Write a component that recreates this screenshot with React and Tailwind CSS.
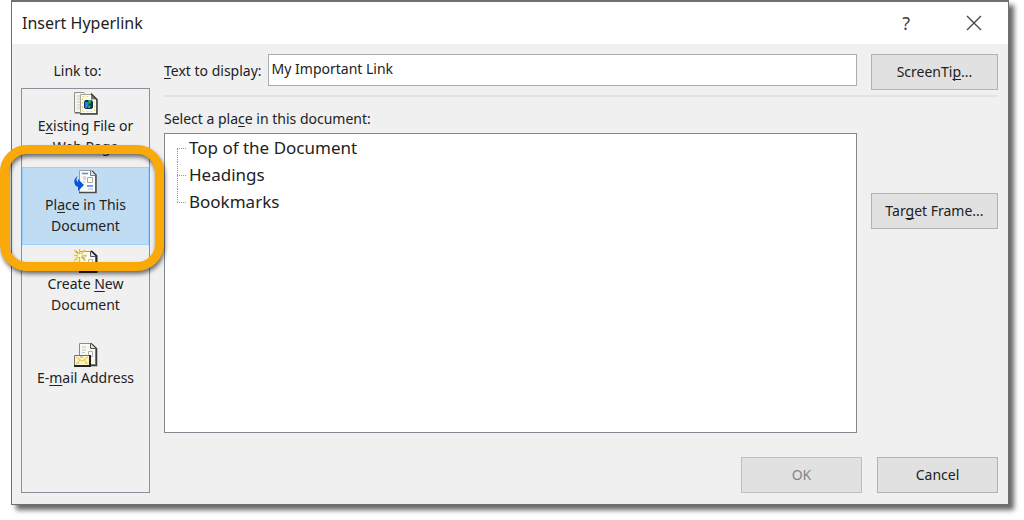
import React, { useState } from "react";

const FileIcon = () => (
  <svg width="24" height="24" viewBox="0 0 24 24" aria-hidden="true">
    <path d="M.5 1.500h9l2 2v18h-11z" fill="#f4f3ee" stroke="#8f8f8b" />
    <path d="M1 22h10" stroke="#55554f" />
    <path d="M3 5h4M3 8h3M3 11h3M3 14h3M3 17h3" stroke="#c9c8c2" />
    <path d="M6.500 3.500h11l5 5v14h-16z" fill="#fdfcf3" stroke="#aaa79a" />
    <path d="M8.500 5.500h8M8.500 7v13M8.500 20.500h12M20.500 10v10" stroke="#ead98a" strokeDasharray="2 2" fill="none" />
    <path d="M17 3l5.500 5.500h-5.500z" fill="#77776f" />
    <path d="M17 2.500l6 6v14.500h-17" stroke="#3b3b36" strokeWidth="1.500" fill="none" />
    <path d="M11.500 9h6l1.500 1.500v6l-1.500 1.500h-6l-1.500-1.500v-6z" fill="#12305c" />
    <path d="M11 11h3l1 2-2 4h-2z" fill="#1e86e0" />
    <path d="M14 9h3v3l-2 1zM14 15l3-1-1 3h-2z" fill="#2cb04a" />
  </svg>
);

const PlaceIcon = () => (
  <svg width="24" height="24" viewBox="0 0 24 24" aria-hidden="true">
    <path d="M5.500 .5h12l4 4v18h-16z" fill="#fbfbfa" stroke="#9b9d9f" />
    <path d="M18 1l4 4v17.500H5" stroke="#4b4a48" strokeWidth="1.500" fill="none" />
    <path d="M16.500 .5v5h5" fill="#e2e3e4" stroke="#77787a" />
    <path d="M8 3.500h6" stroke="#4a8cf0" strokeWidth="1.500" />
    <path d="M9 7h3M9 9h3M9 12h2M14 19h5" stroke="#b6b8bb" />
    <path d="M13.500 7.500h5v5h-5z" fill="#fff" stroke="#a5a7aa" />
    <path d="M13 16h6" stroke="#3d82ec" strokeWidth="1.500" />
    <path d="M4 6C0 8-1 13 2 16l2 1v4l6-6-6-6v3c-2-1-2-4 0-6z" fill="#0b55d8" />
  </svg>
);

const NewIcon = () => (
  <svg width="24" height="24" viewBox="0 0 24 24" aria-hidden="true">
    <path d="M5.500 2.500h12l4 4v16h-16z" fill="#fbfbf8" stroke="#9a9a96" />
    <path d="M17 2l5.500 5v16H5" stroke="#2b2b28" strokeWidth="2" fill="none" />
    <path d="M16.500 2.500v5h5" fill="#e6e6e2" stroke="#55554f" />
    <path d="M14.500 10.500h4v5h-4zM9 8h3M9 11h3M9 14h3" stroke="#b9b9b4" fill="none" />
    <path d="M0 1l11 10M0 12L11 1M5.500 0v4M5.500 9v4M0 6.500h4M8 6.500h5" stroke="#e8c92c" strokeWidth="1.500" />
    <path d="M4 5h3v3H4z" fill="#fffbe0" />
    <path d="M2 2l2 2M8 8l2 2" stroke="#8c8768" />
  </svg>
);

const MailIcon = () => (
  <svg width="24" height="24" viewBox="0 0 24 24" aria-hidden="true">
    <path d="M5.500 .5h12l4 4v17h-16z" fill="#f8f8f5" stroke="#8c8c88" />
    <path d="M17 .5l5.500 5v17H13" stroke="#3b3b36" strokeWidth="1.500" fill="none" />
    <path d="M16.500 .5v5h5" fill="#e2e2de" stroke="#55554f" />
    <path d="M8 4h4M8 7h4M8 9.500h3" stroke="#c2c2bc" />
    <path d="M14.500 8.500h4v5h-4z" fill="#fff" stroke="#b0b0aa" />
    <path d="M.5 12.500h15v10H.5z" fill="#fdf3c4" stroke="#77756a" />
    <path d="M0 23h16V12" stroke="#22221f" strokeWidth="2" fill="none" />
    <path d="M2 14l6 4 6-4M2 21l4-4M14 21l-4-4" stroke="#e6c63c" fill="none" />
    <path d="M6 14h3M4 20h1M11 20h1" stroke="#a8a78f" />
  </svg>
);

const LINK_TYPES = [
  { id: "file", icon: FileIcon, label: <>E<u>x</u>isting File or<br />Web Page</>, padding: "pt-px" },
  { id: "place", icon: PlaceIcon, label: <>Pl<u>a</u>ce in This<br />Document</>, padding: "pt-[2px]" },
  { id: "new", icon: NewIcon, label: <>Create <u>N</u>ew<br />Document</>, padding: "pt-[3px]" },
  { id: "email", icon: MailIcon, label: <>E-<u>m</u>ail Address</>, padding: "pt-[3px]", className: "mt-4" },
];

const PLACES = ["Top of the Document", "Headings", "Bookmarks"];

const DialogButton = ({ children, className = "", ...props }) => (
  <button
    type="button"
    className={`h-9 border border-[#b2b2b2] bg-[#e1e1e1] text-center disabled:border-[#bfbfbf] disabled:text-[#858585] ${className}`}
    {...props}
  >
    {children}
  </button>
);

const LinkTypeButton = ({ type, selected, onSelect }) => {
  const Icon = type.icon;

  return (
    <div className={`relative ${type.className || ""}`}>
      <button
        type="button"
        aria-pressed={selected}
        onClick={() => onSelect(type.id)}
        className={`flex h-[78px] w-full flex-col items-center border leading-[21px] ${type.padding} ${
          selected ? "border-[#99d1ff] bg-[#c0dcf3]" : "border-transparent"
        }`}
      >
        <Icon />
        <span>{type.label}</span>
      </button>
      {/* Callout ring */}
      {selected && (
        <div className="pointer-events-none absolute -top-[22px] -right-[15px] -bottom-[26px] -left-[22px] z-10 rounded-[27px] border-[9px] border-[#f9a908] drop-shadow-[1px_3px_2px_rgba(0,0,0,0.55)]" />
      )}
    </div>
  );
};

const App = () => {
  const [linkType, setLinkType] = useState("place");
  const [text, setText] = useState("My Important Link");

  return (
    <div className="overflow-hidden bg-white pr-[15px] pb-[15px] pl-[11px] font-['Noto_Sans','Open_Sans',sans-serif] text-sm text-[#222] [&_u]:underline-offset-2 [&_u]:[text-decoration-skip-ink:none]">
      <div
        role="dialog"
        aria-labelledby="dialog-title"
        className="border border-t-2 border-[#707070] bg-[#f0f0f0] shadow-[5px_5px_5px_rgba(0,0,0,0.6)]"
      >
        <header className="flex h-[42px] items-center bg-white pr-[26px] pl-[10px]">
          <h1 id="dialog-title" className="flex-1 text-base">
            Insert Hyperlink
          </h1>
          <button type="button" aria-label="Help" className="mr-[56px] text-lg text-[#444]">
            ?
          </button>
          <button type="button" aria-label="Close">
            <svg width="16" height="16" viewBox="0 0 16 16" aria-hidden="true">
              <path d="M1 1l14 14M15 1L1 15" stroke="#444" strokeWidth="1.300" />
            </svg>
          </button>
        </header>

        <div className="flex gap-[14px] pt-[10px] pr-[10px] pb-[11px] pl-[9px]">
          <aside className="flex w-[129px] shrink-0 flex-col">
            <h2 className="h-[34px] pr-4 text-center leading-[34px]">Link to:</h2>
            <nav className="flex-1 border border-[#8d8f9b] text-center">
              {LINK_TYPES.map((type) => (
                <LinkTypeButton
                  key={type.id}
                  type={type}
                  selected={type.id === linkType}
                  onSelect={setLinkType}
                />
              ))}
            </nav>
          </aside>

          <main className="min-w-0 flex-1">
            <div className="flex items-start border-b-2 border-[#e3e3e3] pb-[5px]">
              <label htmlFor="display-text" className="mr-[6px] leading-[34px] whitespace-nowrap">
                <u>T</u>ext to display:
              </label>
              <input
                id="display-text"
                type="text"
                value={text}
                onChange={(e) => setText(e.target.value)}
                className="mr-[14px] h-8 min-w-0 flex-1 border border-[#abadb3] bg-white px-[3px] pb-[3px] outline-none"
              />
              <DialogButton className="w-[127px]">
                ScreenTi<u>p</u>...
              </DialogButton>
            </div>

            <div id="places-label" className="mt-3 mb-1 leading-5">
              Select a pla<u>c</u>e in this document:
            </div>
            <div className="flex gap-[14px]">
              <ul
                role="tree"
                aria-labelledby="places-label"
                className="h-[300px] flex-1 border border-[#828790] bg-white pt-px pl-3 text-[17px]"
              >
                {PLACES.map((place, i) => (
                  <li key={place} role="treeitem" className="flex h-[27px] items-center">
                    <span className="flex h-full w-[9px] flex-col">
                      <span className={`flex-1 border-[#999] ${i > 0 ? "border-l border-dotted" : ""}`} />
                      <span
                        className={`flex-1 border-t border-dotted border-[#999] ${
                          i < PLACES.length - 1 ? "border-l" : ""
                        }`}
                      />
                    </span>
                    <span className="pl-[3px]">{place}</span>
                  </li>
                ))}
              </ul>
              <DialogButton className="mt-[60px] w-[127px]">
                Tar<u>g</u>et Frame...
              </DialogButton>
            </div>

            <div className="mt-6 flex justify-end gap-[15px]">
              <DialogButton disabled className="w-[121px]">
                OK
              </DialogButton>
              <DialogButton className="w-[121px]">Cancel</DialogButton>
            </div>
          </main>
        </div>
      </div>
    </div>
  );
};

export default App;
